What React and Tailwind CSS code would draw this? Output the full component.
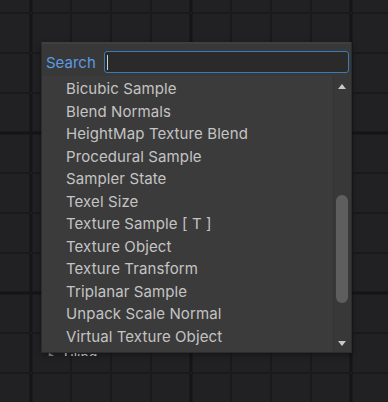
import React from 'react';

const ITEMS = [
  'Bicubic Sample',
  'Blend Normals',
  'HeightMap Texture Blend',
  'Procedural Sample',
  'Sampler State',
  'Texel Size',
  'Texture Sample [ T ]',
  'Texture Object',
  'Texture Transform',
  'Triplanar Sample',
  'Unpack Scale Normal',
  'Virtual Texture Object',
];

function GridCanvas() {
  const xs = [];
  for (let x = 31; x < 400; x += 40) xs.push(x);
  const ys = [];
  for (let y = 13; y < 410; y += 40) ys.push(y);
  return (
    <svg className="absolute inset-0" width="388" height="402">
      <rect width="388" height="402" fill="#212124" />
      {xs.map(x => {
        const major = (x - 31) % 160 === 0;
        return <line key={'x' + x} x1={x} y1="0" x2={x} y2="402" stroke={major ? '#151517' : '#1a1a1c'} strokeWidth={major ? 3 : 2} />;
      })}
      {ys.map(y => {
        const major = (y - 133) % 160 === 0;
        return <line key={'y' + y} x1="0" y1={y} x2="388" y2={y} stroke={major ? '#151517' : '#1a1a1c'} strokeWidth={major ? 3 : 2} />;
      })}
    </svg>
  );
}

export default function App() {
  return (
    <div className="relative w-[388px] h-[402px] overflow-hidden bg-[#212124] font-['Inter',sans-serif]">
      <GridCanvas />

      {/* node row peeking out below the popup, mostly cut by the next frame */}
      <div className="absolute left-[48px] top-[352px] h-[4px] overflow-hidden">
        <div className="flex items-start gap-[5px] -mt-[3px] text-[14px] leading-[16px]">
          <span className="text-[#8a8a8a] text-[9px] leading-[16px]">▶</span>
          <span className="text-[#d8d8d8]">Tiling</span>
        </div>
      </div>

      {/* searcher popup */}
      <div className="absolute left-[41px] top-[42px] w-[311px] h-[311px] bg-[#383838] border border-[#2c2c2c] shadow-[0_2px_6px_rgba(0,0,0,0.35)] flex flex-col">
        <div className="flex items-center h-[34px] pl-[4px] pr-[2px] pt-[4px] border-t-2 border-[#3f3f3f] -mt-px">
          <span className="text-[#5c9ae4] text-[15px] w-[58px] mt-[2px]">Search</span>
          <div className="flex-1 h-[22px] bg-[#2a2a2a] border border-[#3a79bb] rounded-[3px] flex items-center pl-[2px]">
            <div className="w-px h-[15px] bg-[#d0d0d0]" />
          </div>
        </div>
        <div className="flex flex-1">
          <div className="flex-1 bg-[#3b3b3b] pt-[2px]">
            {ITEMS.map(it => (
              <div key={it} className="h-[22.5px] flex items-center pl-[24px] text-[15px] tracking-[0.1px] text-[#c4c4c4] whitespace-nowrap">
                {it}
              </div>
            ))}
          </div>
          <div className="w-[18px] bg-[#383838] border-l border-[#333333] flex flex-col items-center pr-[2px]">
            <svg className="mt-[8px]" width="8" height="5" viewBox="0 0 8 5"><path d="M0 5L4 0L8 5Z" fill="#c8c8c8" /></svg>
            <div className="mt-[106px] w-[12px] h-[108px] rounded-[6px] bg-[#5e5e5e]" />
            <div className="flex-1" />
            <svg className="mb-[6px]" width="8" height="5" viewBox="0 0 8 5"><path d="M0 0L8 0L4 5Z" fill="#c8c8c8" /></svg>
          </div>
        </div>
      </div>
    </div>
  );
}
